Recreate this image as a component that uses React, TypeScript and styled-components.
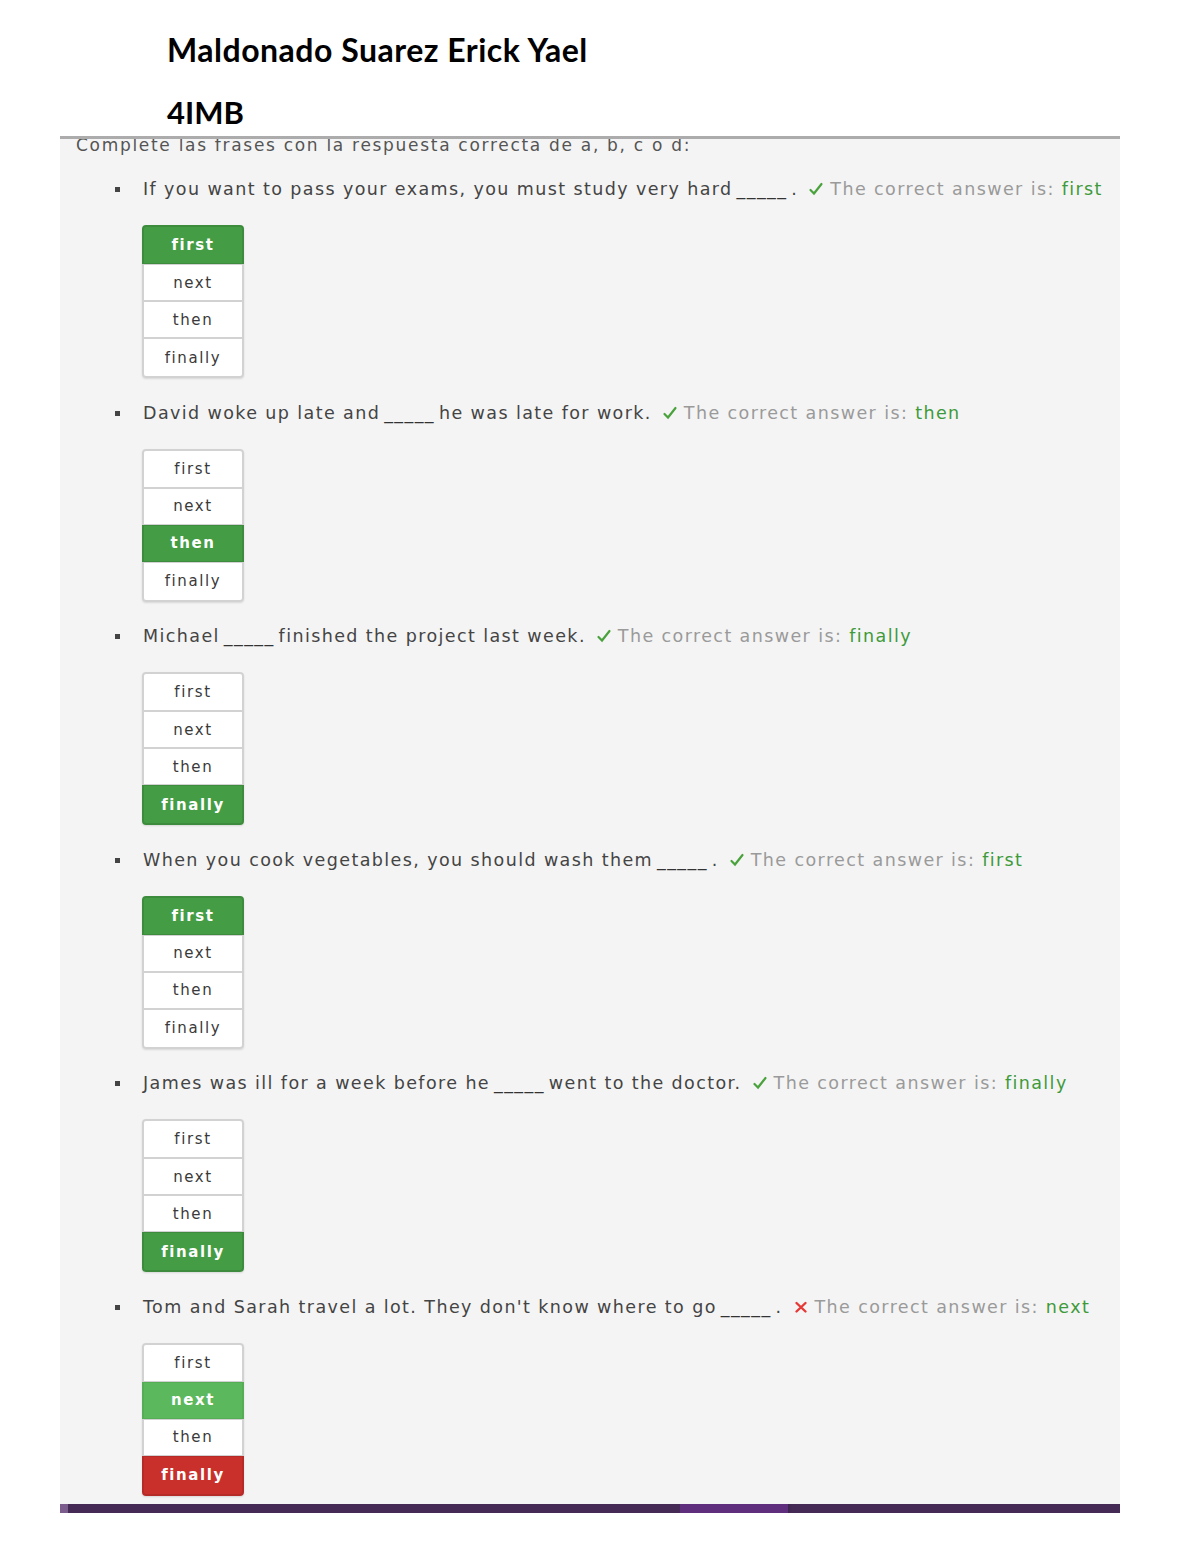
import styled, { createGlobalStyle } from "styled-components";

const GlobalStyle = createGlobalStyle`
  body {
    margin: 0;
    background: #ffffff;
  }
`;

type Option = "first" | "next" | "then" | "finally";
type Question = {
  before: string;
  after: string;
  answer: Option;
  chosen: Option;
};

const OPTIONS: Option[] = ["first", "next", "then", "finally"];

const QUESTIONS: Question[] = [
  { before: "If you want to pass your exams, you must study very hard", after: " .", answer: "first", chosen: "first" },
  { before: "David woke up late and", after: "he was late for work.", answer: "then", chosen: "then" },
  { before: "Michael", after: "finished the project last week.", answer: "finally", chosen: "finally" },
  { before: "When you cook vegetables, you should wash them", after: " .", answer: "first", chosen: "first" },
  { before: "James was ill for a week before he", after: "went to the doctor.", answer: "finally", chosen: "finally" },
  { before: "Tom and Sarah travel a lot. They don't know where to go", after: " .", answer: "next", chosen: "finally" },
];

const Page = styled.div`
  width: 1200px;
  min-height: 1553px;
  padding-top: 30px;
  box-sizing: border-box;
`;

const Header = styled.header`
  padding-left: 167px;
  font-family: Lato, "Open Sans", sans-serif;
  font-weight: 700;
  color: #000;
`;

const Name = styled.h1`
  margin: 0;
  font-size: 32px;
  letter-spacing: 0.5px;
  line-height: 40px;
  font-weight: 700;
`;

const Group = styled.h2`
  margin: 22px 0 0;
  font-size: 31px;
  line-height: 40px;
  font-weight: 700;
`;

const Panel = styled.section`
  position: relative;
  margin: 4px 80px 0 60px;
  height: 1368px;
  background: #f4f4f4;
  overflow: hidden;
  font-family: "DejaVu Sans", Verdana, sans-serif;
  color: #4a4a4a;

  &::before {
    content: "";
    position: absolute;
    top: 0;
    left: 0;
    right: 0;
    height: 3px;
    background: #acacac;
  }
`;

const Intro = styled.p`
  margin: -2px 0 0 16px;
  font-size: 17px;
  letter-spacing: 1.7px;
  line-height: 22px;
  color: #555;
`;

const List = styled.ul`
  margin: 21px 0 0;
  padding: 0 0 0 83px;
  list-style: none;
`;

const Item = styled.li`
  position: relative;
  padding-bottom: 22.6px;

  &::before {
    content: "";
    position: absolute;
    left: -28px;
    top: 10px;
    width: 5px;
    height: 5px;
    background: #444;
  }
`;

const Sentence = styled.div`
  font-size: 17.5px;
  letter-spacing: 1.4px;
  line-height: 24px;
  white-space: nowrap;
  color: #444;
  display: flex;
  align-items: center;
`;

const Blank = styled.span`
  color: #333;
  margin: 0 4px;
`;

const Feedback = styled.span`
  color: #9a9a9a;
  margin-left: 4px;
`;

const Correct = styled.span`
  color: #3e9a3a;
`;

const Mark = styled.svg`
  width: 16px;
  height: 16px;
  margin: 0 2px 0 10px;
  flex: none;
`;

const Options = styled.div`
  margin: 24px 0 0 -1px;
  width: 102px;
  display: flex;
  flex-direction: column;
  border-radius: 4px;
  box-shadow: 0 1px 2px rgba(0, 0, 0, 0.12);
`;

type Tone = "plain" | "chosen" | "right" | "wrong";

const TONES: Record<Tone, { bg: string; fg: string; border: string }> = {
  plain: { bg: "#ffffff", fg: "#3a3a3a", border: "#d2d2d2" },
  chosen: { bg: "#449d44", fg: "#ffffff", border: "#3d8b3d" },
  right: { bg: "#5cb85c", fg: "#ffffff", border: "#55ad55" },
  wrong: { bg: "#c9302c", fg: "#ffffff", border: "#b52b27" },
};

const OptionButton = styled.div<{ $tone: Tone }>`
  height: 38px;
  box-sizing: border-box;
  margin-top: -1px;
  display: flex;
  align-items: center;
  justify-content: center;
  font-size: 15px;
  letter-spacing: 1.6px;
  font-weight: ${(p) => (p.$tone === "plain" ? 400 : 700)};
  background: ${(p) => TONES[p.$tone].bg};
  color: ${(p) => TONES[p.$tone].fg};
  border: 2px solid ${(p) => TONES[p.$tone].border};
  border-top-width: 1px;

  &:first-child {
    margin-top: 0;
    height: 40px;
    border-top-width: 2px;
    border-radius: 4px 4px 0 0;
  }

  &:last-child {
    height: 40px;
    border-radius: 0 0 4px 4px;
  }
`;

const Footer = styled.div`
  margin: 0 80px 0 60px;
  height: 9px;
  background: linear-gradient(
    to right,
    #7b5c8c 0,
    #7b5c8c 8px,
    #452a55 8px,
    #452a55 620px,
    #5f2f7d 620px,
    #5f2f7d 728px,
    #3d2450 728px,
    #452a55 732px
  );
`;

function Tick() {
  return (
    <Mark viewBox="0 0 16 16">
      <path d="M2.5 9 L6 12.5 L13.5 3" fill="none" stroke="#4aa23c" strokeWidth="2.2" strokeLinecap="round" />
    </Mark>
  );
}

function Cross() {
  return (
    <Mark viewBox="0 0 16 16">
      <path d="M3.5 4 L12.5 12.5 M12.5 4 L3.5 12.5" fill="none" stroke="#e53935" strokeWidth="2.4" strokeLinecap="round" />
    </Mark>
  );
}

function toneFor(q: Question, o: Option): Tone {
  if (q.chosen === q.answer) return o === q.chosen ? "chosen" : "plain";
  if (o === q.chosen) return "wrong";
  if (o === q.answer) return "right";
  return "plain";
}

export default function App() {
  return (
    <Page>
      <GlobalStyle />
      <Header>
        <Name>Maldonado Suarez Erick Yael</Name>
        <Group>4IMB</Group>
      </Header>
      <Panel>
        <Intro>Complete las frases con la respuesta correcta de a, b, c o d:</Intro>
        <List>
          {QUESTIONS.map((q, i) => (
            <Item key={i}>
              <Sentence>
                {q.before}
                <Blank>_____</Blank>
                {q.after}
                {q.chosen === q.answer ? <Tick /> : <Cross />}
                <Feedback>
                  The correct answer is: <Correct>{q.answer}</Correct>
                </Feedback>
              </Sentence>
              <Options>
                {OPTIONS.map((o) => (
                  <OptionButton key={o} $tone={toneFor(q, o)}>
                    {o}
                  </OptionButton>
                ))}
              </Options>
            </Item>
          ))}
        </List>
      </Panel>
      <Footer />
    </Page>
  );
}
